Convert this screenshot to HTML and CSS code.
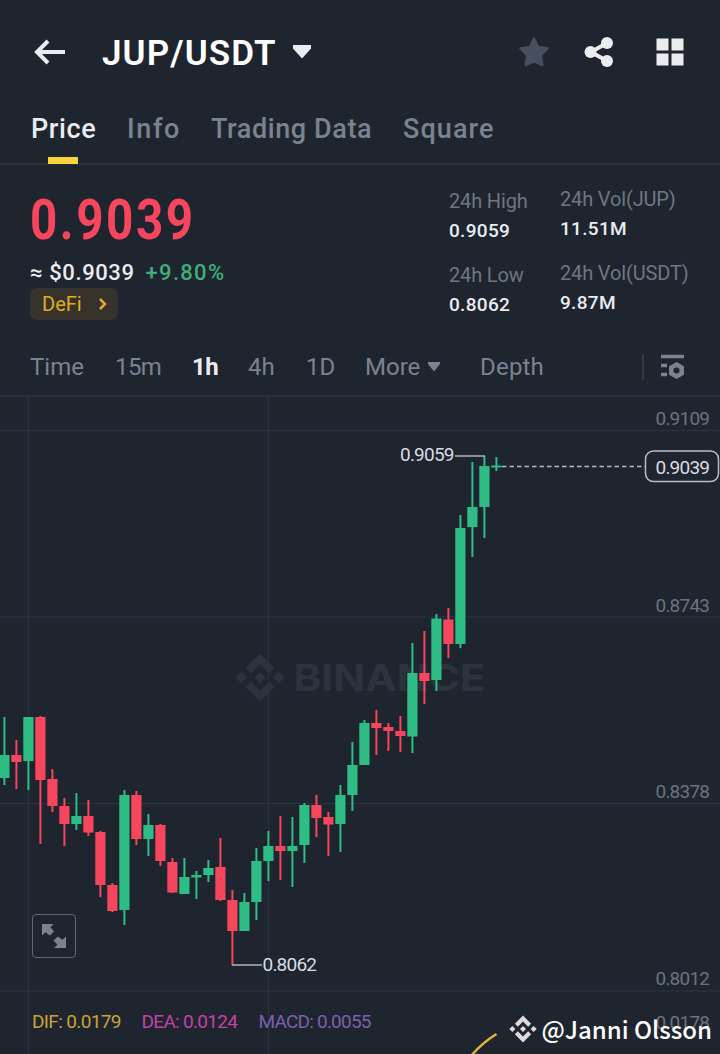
FILE: index.html
```html
<!DOCTYPE html>
<html lang="en">
<head>
    <meta charset="UTF-8">
    <meta name="viewport" content="width=device-width, initial-scale=1.0">
    <title>JUP/USDT</title>
    <link rel="stylesheet" href="styles.css">
</head>
<body>
    <header class="topbar">
        <svg class="back" width="32" height="26" viewBox="0 0 32 26">
            <path d="M14 2 L3 13 L14 24 M3 13 H31" fill="none" stroke="#eaecef" stroke-width="4"/>
        </svg>
        <h1 class="pair">JUP/USDT</h1>
        <svg class="caret" width="20" height="16" viewBox="0 0 20 16">
            <path d="M1 1 H19 V4.500 L10 14.500 L1 4.500 Z" fill="#eaecef"/>
        </svg>
        <div class="actions">
            <svg width="32" height="32" viewBox="0 0 32 32">
                <path d="M16 2.500 L20 11 L29.500 12.500 L22.800 19.500 L24.300 29 L16 25 L7.700 29 L9.200 19.500 L2.500 12.500 L12 11 Z" fill="#474f5d" stroke="#474f5d" stroke-width="2.500" stroke-linejoin="round"/>
            </svg>
            <svg class="share" width="32" height="32" viewBox="0 0 32 32">
                <path d="M24 7 L8 16 L24 25" fill="none" stroke="#eaecef" stroke-width="4"/>
                <circle cx="7.500" cy="16" r="6" fill="#eaecef"/>
                <circle cx="24" cy="7" r="6" fill="#eaecef"/>
                <circle cx="24" cy="25" r="6" fill="#eaecef"/>
            </svg>
            <svg width="28" height="28" viewBox="0 0 28 28">
                <path d="M0.500 0.500 h12 v12 h-12 z M15.500 0.500 h12 v12 h-12 z M0.500 15.500 h12 v12 h-12 z M15.500 15.500 h12 v12 h-12 z" fill="#eaecef"/>
            </svg>
        </div>
    </header>

    <nav class="tabs">
        <a class="tab active">Price</a>
        <a class="tab info">Info</a>
        <a class="tab trading">Trading Data</a>
        <a class="tab square">Square</a>
    </nav>

    <section class="summary">
        <div class="quote">
            <div class="last">0.9039</div>
            <div class="fiat"><span class="approx">≈ $0.9039</span><span class="change">+9.80%</span></div>
            <div class="tag">
                <span>DeFi</span>
                <svg width="8" height="12" viewBox="0 0 8 12"><path d="M1 1 L6 6 L1 11" fill="none" stroke="#e0ae1c" stroke-width="2.500"/></svg>
            </div>
        </div>
        <div class="stats">
            <div class="stat"><span class="label">24h High</span><span class="value">0.9059</span></div>
            <div class="stat"><span class="label">24h Low</span><span class="value">0.8062</span></div>
        </div>
        <div class="stats vol">
            <div class="stat"><span class="label">24h Vol(JUP)</span><span class="value">11.51M</span></div>
            <div class="stat"><span class="label">24h Vol(USDT)</span><span class="value">9.87M</span></div>
        </div>
    </section>

    <div class="intervals">
        <span class="iv time">Time</span>
        <span class="iv m15">15m</span>
        <span class="iv h1">1h</span>
        <span class="iv h4">4h</span>
        <span class="iv d1">1D</span>
        <span class="iv more">More</span>
        <svg class="more-caret" width="14" height="12" viewBox="0 0 14 12"><path d="M1 1 H13 V3 L7 10.500 L1 3 Z" fill="#7b8290"/></svg>
        <span class="iv depth">Depth</span>
        <span class="settings">
            <svg width="26" height="26" viewBox="0 0 26 26">
                <path d="M1 2.500 H24 M1 11.500 H7 M1 20.500 H7" stroke="#7b8290" stroke-width="3.600"/>
                <path d="M16.500 10.500 L21.700 13.500 V19.500 L16.500 22.500 L11.300 19.500 V13.500 Z" fill="none" stroke="#7b8290" stroke-width="4.500"/>
            </svg>
        </span>
    </div>

    <main class="chart">
        <!-- viewBox keeps page coordinates, the chart starts at y=397 -->
        <svg class="plot" width="720" height="657" viewBox="0 397 720 657">
            <path class="grid" d="M0 430.500 H720 M0 617 H720 M0 803.500 H720 M0 991 H720 M28.500 397 V1054 M268.500 397 V1054"/>
            <g class="watermark">
                <g transform="translate(260 677.500)">
                    <path d="M0 -24 L14.500 -9.500 L9.200 -4.200 L0 -13.400 L-9.200 -4.200 L-14.500 -9.500 Z"/>
                    <path d="M0 24 L14.500 9.500 L9.200 4.200 L0 13.400 L-9.200 4.200 L-14.500 9.500 Z"/>
                    <path d="M0 -5.500 L5.500 0 L0 5.500 L-5.500 0 Z M-19 -5.500 L-13.500 0 L-19 5.500 L-24.500 0 Z M19 -5.500 L24.500 0 L19 5.500 L13.500 0 Z"/>
                </g>
                <text x="293.500" y="691" textLength="192" lengthAdjust="spacingAndGlyphs">BINANCE</text>
            </g>
            <g id="candles"></g>
            <path class="leader" d="M455 456 H485 M232 965 H262"/>
            <path class="last-line" d="M502 466.500 H645"/>
            <text class="mark" x="400" y="461" textLength="54.500">0.9059</text>
            <text class="mark" x="262.500" y="971" textLength="54.500">0.8062</text>
            <g class="axis">
                <text x="655.500" y="425" textLength="54.500">0.9109</text>
                <text x="655.500" y="612" textLength="54.500">0.8743</text>
                <text x="655.500" y="798" textLength="54.500">0.8378</text>
                <text x="655.500" y="985" textLength="54.500">0.8012</text>
                <text x="655.500" y="1029" textLength="54.500">0.0178</text>
            </g>
            <rect class="price-box" x="645.500" y="451" width="73" height="30.500" rx="8"/>
            <text class="price" x="655.500" y="473.500" textLength="54.500">0.9039</text>
            <text class="macd dif" x="32" y="1028" textLength="89.500">DIF: 0.0179</text>
            <text class="macd dea" x="141.500" y="1028" textLength="96.500">DEA: 0.0124</text>
            <text class="macd bar" x="258.500" y="1028" textLength="113">MACD: 0.0055</text>
            <path class="dif-line" d="M471 1056 Q482 1043 496.500 1034"/>
        </svg>
        <div class="expand">
            <svg width="26" height="26" viewBox="0 0 26 26">
                <path d="M1 1 H12.500 L9.500 4.200 L13 8.500 L9 12.500 L4.500 9.200 L1 12.500 Z M25 25 H13 L16.500 21.800 L12.500 17.500 L16.800 13.500 L21.500 16.800 L25 13.500 Z" fill="#7b8290"/>
            </svg>
        </div>
        <div class="author">
            <svg width="28" height="28" viewBox="-25 -25 50 50" fill="#dcdcdc">
                <path d="M0 -24 L14.500 -9.500 L9.200 -4.200 L0 -13.400 L-9.200 -4.200 L-14.500 -9.500 Z"/>
                <path d="M0 24 L14.500 9.500 L9.200 4.200 L0 13.400 L-9.200 4.200 L-14.500 9.500 Z"/>
                <path d="M0 -5.500 L5.500 0 L0 5.500 L-5.500 0 Z M-19 -5.500 L-13.500 0 L-19 5.500 L-24.500 0 Z M19 -5.500 L24.500 0 L19 5.500 L13.500 0 Z"/>
            </svg>
            <span>@Janni Olsson</span>
        </div>
    </main>
    <script src="chart.js"></script>
</body>
</html>
```

FILE: styles.css
```css
*{
    margin: 0;
    padding: 0;
    box-sizing: border-box;
}
body{
    width: 720px;
    height: 1054px;
    overflow: hidden;
    background-color: #1f252f;
    color: #eaecef;
    font-family: Roboto, "Liberation Sans", sans-serif;
}
svg{
    display: block;
    flex-shrink: 0;
}
.topbar{
    display: flex;
    align-items: center;
    height: 104px;
    padding: 0 36px 0 34px;
}
.pair{
    width: 174px;
    margin-left: 36px;
    padding-top: 4px;
    font-size: 35px;
    font-weight: 600;
    line-height: 40px;
    letter-spacing: 1.1px;
    white-space: nowrap;
    color: #fff;
}
.caret{
    margin-left: 16px;
}
.actions{
    display: flex;
    align-items: center;
    gap: 33px;
    margin-left: auto;
}
.share{
    margin-right: 8px;
}
.tabs{
    display: flex;
    height: 61px;
    padding-left: 31px;
    border-bottom: 2px solid #2a303a;
}
.tab{
    position: relative;
    padding-top: 8px;
    font-size: 27px;
    font-weight: 500;
    line-height: 34px;
    white-space: nowrap;
    color: #7b8290;
}
.tab.active{
    width: 96px;
    letter-spacing: 0.6px;
    color: #eaecef;
}
.tab.active::after{
    content: "";
    position: absolute;
    left: 17px;
    bottom: -1px;
    width: 30px;
    height: 7px;
    background-color: #f8d33a;
}
.info{
    width: 84px;
    letter-spacing: 1.6px;
}
.trading{
    width: 192px;
    letter-spacing: 0.6px;
}
.square{
    letter-spacing: 1.1px;
}
.summary{
    display: flex;
    height: 174px;
    padding: 21px 0 0 30px;
}
.quote{
    width: 419px;
}
.last{
    width: 200px;
    padding-top: 3px;
    font-size: 56px;
    font-weight: 700;
    line-height: 62px;
    letter-spacing: 3px;
    transform: scaleX(0.85);
    transform-origin: left;
    color: #f6465d;
}
.fiat{
    display: flex;
    gap: 11px;
    padding-top: 8px;
    font-size: 22px;
    font-weight: 500;
    line-height: 28px;
    letter-spacing: 0.6px;
}
.change{
    letter-spacing: 1.3px;
    color: #3fae7e;
}
.tag{
    display: flex;
    align-items: center;
    gap: 17px;
    width: 88px;
    height: 32px;
    margin-top: 1px;
    padding-left: 12px;
    border-radius: 7px;
    background-color: #35332c;
    font-size: 20px;
    color: #e0ae1c;
}
.stats{
    display: flex;
    flex-direction: column;
    gap: 18px;
    width: 111px;
    padding-top: 2px;
}
.vol{
    padding-top: 0;
}
.stat{
    display: flex;
    flex-direction: column;
    gap: 2px;
    white-space: nowrap;
}
.label{
    font-size: 20px;
    line-height: 27px;
    letter-spacing: -0.15px;
    color: #6f7683;
}
.value{
    font-size: 19px;
    font-weight: 500;
    line-height: 27px;
    letter-spacing: 0.3px;
}
.intervals{
    display: flex;
    align-items: center;
    height: 58px;
    padding-left: 30px;
    border-bottom: 2px solid #282e39;
}
.iv{
    font-size: 24px;
    line-height: 30px;
    white-space: nowrap;
    color: #7b8290;
}
.time{
    width: 85px;
}
.m15{
    width: 77px;
    letter-spacing: -0.6px;
}
.h1{
    width: 56px;
    font-weight: 700;
    letter-spacing: -0.6px;
    color: #eaecef;
}
.h4{
    width: 58px;
}
.d1{
    width: 59px;
}
.more{
    width: 62px;
}
.depth{
    width: 162px;
    margin-left: 39px;
    letter-spacing: 0.2px;
}
.settings{
    padding-left: 16px;
    border-left: 2px solid #323844;
}
.chart{
    position: relative;
    height: 657px;
}
.grid{
    fill: none;
    stroke: #2b313c;
    stroke-width: 1.5;
}
.watermark{
    fill: #2d333e;
    font-family: Inter, sans-serif;
    font-size: 37px;
    font-weight: 700;
}
.up{
    fill: #2ebd85;
}
.down{
    fill: #f6465d;
}
.leader{
    fill: none;
    stroke: #aeb4bc;
    stroke-width: 1.5;
}
.last-line{
    fill: none;
    stroke: #b7bdc6;
    stroke-width: 1.5;
    stroke-dasharray: 4.5 3;
}
.mark,
.price{
    fill: #d9dce1;
    font-size: 19px;
}
.axis{
    fill: #6b727f;
    font-size: 19px;
}
.price-box{
    fill: #1f252f;
    stroke: #b7bdc6;
    stroke-width: 1.5;
}
.macd{
    font-size: 19px;
}
.dif{
    fill: #c9a23a;
}
.dea{
    fill: #c243a6;
}
.bar{
    fill: #7a60ae;
}
.dif-line{
    fill: none;
    stroke: #dfb23f;
    stroke-width: 2.5;
}
.expand{
    position: absolute;
    left: 32px;
    top: 517px;
    display: flex;
    align-items: center;
    justify-content: center;
    width: 44px;
    height: 44px;
    border: 1.5px solid #606775;
    border-radius: 4px;
}
.author{
    position: absolute;
    right: 8px;
    bottom: 9px;
    display: flex;
    align-items: center;
    gap: 4px;
    font-family: "Noto Sans CJK SC", "Noto Sans", sans-serif;
    font-size: 24px;
    font-weight: 500;
    line-height: 32px;
    white-space: nowrap;
    color: #fff;
}
```

FILE: chart.js
```js
// [direction, high, low, body top, body bottom], one candle every 12px
const candles = [
    ["up", 717, 785, 755, 778],
    ["down", 740, 789, 755, 762],
    ["up", 717, 790, 717, 761],
    ["down", 716, 844, 717, 780],
    ["down", 769, 812, 779, 806],
    ["down", 798, 846, 806, 824],
    ["up", 793, 830, 816, 824],
    ["down", 800, 836, 816, 832.5],
    ["down", 831, 897, 832, 885],
    ["down", 883, 912, 885, 911],
    ["up", 790, 925, 795, 910],
    ["down", 791, 845, 795, 839],
    ["up", 814, 856, 825, 839],
    ["down", 824, 866, 825, 861],
    ["down", 858, 893, 862, 892.5],
    ["up", 858, 894, 877, 894],
    ["up", 871, 899, 875, 877.5],
    ["up", 860, 882, 868, 875],
    ["down", 838, 901, 867, 900],
    ["down", 890, 965, 900, 931],
    ["up", 893, 931, 902, 931],
    ["up", 848, 920, 861, 902],
    ["up", 831, 881, 846, 861],
    ["down", 816, 880, 846, 851],
    ["up", 817, 887, 846, 851],
    ["up", 803, 863, 805, 845],
    ["down", 795, 837, 805, 818],
    ["down", 812, 856, 817, 824.5],
    ["up", 785, 852, 795, 824],
    ["up", 742, 811, 765, 795],
    ["up", 720, 765, 723, 765],
    ["down", 710, 755, 723, 728],
    ["down", 723, 751, 727, 731],
    ["down", 716, 752, 731, 736],
    ["up", 643, 753, 673, 736.5],
    ["down", 631, 704, 673, 681],
    ["up", 614, 691, 618.5, 680],
    ["down", 608, 658, 619.5, 644],
    ["up", 515, 648, 528, 644],
    ["up", 462, 557, 507, 527],
    ["up", 456, 538, 466, 507],
    ["up", 457, 471, 465.5, 467.5]
];

const layer = document.querySelector("#candles");

function addRect(cls, x, y, width, height){
    const rect = document.createElementNS("http://www.w3.org/2000/svg", "rect");
    rect.setAttribute("class", cls);
    rect.setAttribute("x", x);
    rect.setAttribute("y", y);
    rect.setAttribute("width", width);
    rect.setAttribute("height", height);
    layer.appendChild(rect);
}

candles.forEach(([cls, high, low, top, bottom], i) => {
    const center = 4.4 + i * 12;
    addRect(cls, center - 1, high, 2, low - high);
    addRect(cls, center - 5.1, top, 10.2, bottom - top);
});
```
